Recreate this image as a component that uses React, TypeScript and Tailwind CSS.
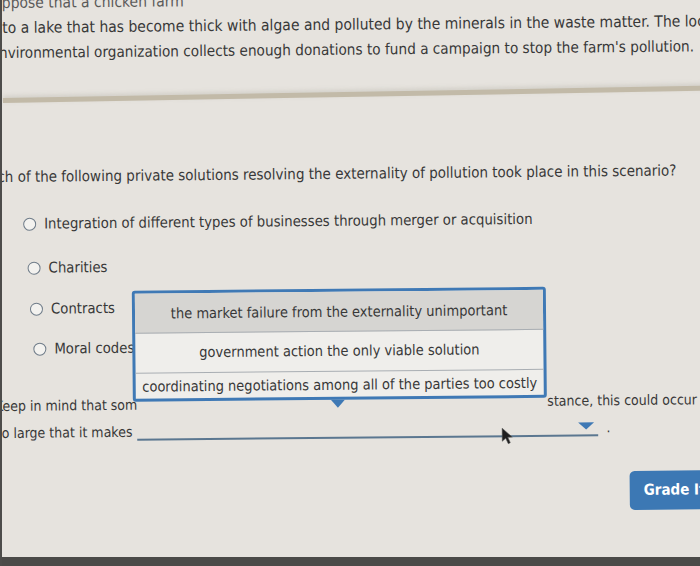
const options = [
  { label: "Integration of different types of businesses through merger or acquisition", cls: "mt-[23px] ml-[19px]" },
  { label: "Charities", cls: "mt-[20px] ml-[23px]" },
  { label: "Contracts", cls: "mt-[17px] ml-[25px]" },
  { label: "Moral codes", cls: "mt-[16px] ml-[28px]" },
];

const choices = [
  "the market failure from the externality unimportant",
  "government action the only viable solution",
  "coordinating negotiations among all of the parties too costly",
];

function Radio() {
  return <span className="inline-block h-[13px] w-[13px] shrink-0 rounded-full border-[1.5px] border-[#6f7c89] bg-[#f3f2ef]" />;
}

function Cursor() {
  return (
    <svg className="absolute left-[364px] top-[11px]" width="12" height="18" viewBox="0 0 12 18">
      <path d="M1 1 L1 14 L4.5 11 L7 16.5 L9 15.5 L6.5 10 L11 10 Z" fill="#1e1e1e" stroke="#555" strokeWidth="0.6" />
    </svg>
  );
}

export default function App() {
  return (
    <div className="flex h-[566px] w-[700px] flex-col overflow-hidden border-l-[2px] border-[#4d4c4a] bg-[#e6e3de] font-['DejaVu_Sans_Condensed','DejaVu_Sans',sans-serif] text-[#383838]">
      <div className="relative flex-1 overflow-hidden">
        <div className="relative flex origin-top-left rotate-[-0.55deg] flex-col">
          {/* scenario text */}
          <div className="mt-[-9px] whitespace-nowrap text-[15.5px] leading-[25px]">
            <p className="ml-[-18px] opacity-80">Suppose that a chicken farm</p>
            <p className="ml-[0px]">to a lake that has become thick with algae and polluted by the minerals in the waste matter. The local</p>
            <p className="ml-[-12px] text-[15.2px]">environmental organization collects enough donations to fund a campaign to stop the farm's pollution.</p>
          </div>

          <div className="mt-[32px] h-[5px] w-[720px] origin-left rotate-[-0.45deg] bg-[#c2baa8] shadow-[0_-2px_4px_rgba(170,165,155,0.35)]" />

          {/* question */}
          <p className="mt-[62px] ml-[-32px] whitespace-nowrap text-[15px] leading-[24px]">
            Which of the following private solutions resolving the externality of pollution took place in this scenario?
          </p>

          <div className="flex flex-col">
            {options.map((o) => (
              <div key={o.label} className={`flex h-[24px] items-center gap-[8px] whitespace-nowrap text-[14.75px] ${o.cls}`}>
                <Radio />
                <span>{o.label}</span>
              </div>
            ))}
          </div>

          <div className="mt-[33px] flex h-[24px] items-center whitespace-nowrap text-[14px]">
            <span className="ml-[-11px]">Keep in mind that som</span>
            <span className="inline-block w-[410px] shrink-0" />
            <span>stance, this could occur</span>
          </div>
          <div className="mt-[3px] flex h-[24px] items-center whitespace-nowrap text-[14px]">
            <span className="ml-[-11px]">so large that it makes</span>
            <span className="relative ml-[5px] mt-[-3px] h-[21px] w-[461px] shrink-0 border-b-[2px] border-[#5b7790]">
              <span className="absolute right-[4px] top-[7px] h-0 w-0 border-x-[8px] border-t-[7px] border-x-transparent border-t-[#3f79b5]" />
              <Cursor />
            </span>
            <span className="ml-[8px]">.</span>
          </div>

          <div className="mt-[32px] flex justify-end">
            <button className="mr-[-31px] h-[39px] w-[106px] rounded-[5px] bg-[#3c78b4] pl-[14px] text-left text-[15px] font-bold text-white">
              Grade It
            </button>
          </div>

          {/* dropdown menu */}
          <div className="absolute left-[127px] top-[292px] w-[414px]">
            <div className="flex flex-col rounded-[3px] border-[3px] border-[#3f79b5] bg-[#efeeeb] text-[14.5px]">
              <div className="flex h-[40px] items-center justify-center border-b border-[#a9aeb3] bg-[#d6d5d2] pt-[2px]">
                {choices[0]}
              </div>
              <div className="flex h-[40px] items-center justify-center border-b border-[#a9aeb3]">{choices[1]}</div>
              <div className="flex h-[25px] justify-center whitespace-nowrap pt-[6px] leading-[14px]">{choices[2]}</div>
            </div>
            <span className="absolute left-[198px] top-full h-0 w-0 border-x-[7px] border-t-[8px] border-x-transparent border-t-[#3f79b5]" />
          </div>
        </div>
      </div>
      <div className="h-[9px] bg-[#4b4a48]" />
    </div>
  );
}
